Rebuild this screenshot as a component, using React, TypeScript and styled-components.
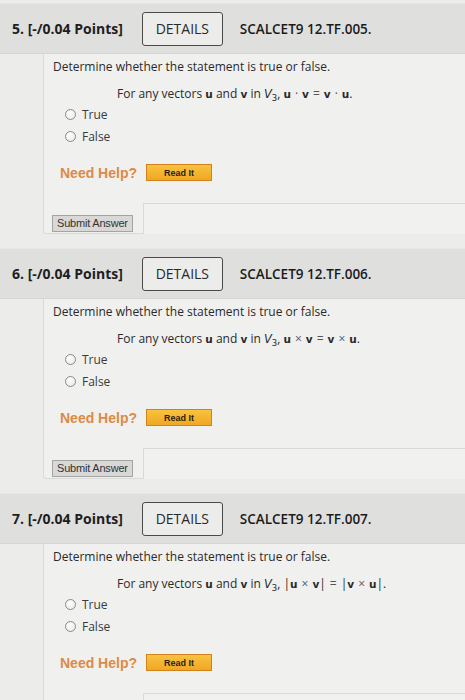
import styled, { createGlobalStyle } from "styled-components";

type Question = {
  num: number;
  code: string;
  lhs: React.ReactNode;
  rhs: React.ReactNode;
};

const GlobalStyle = createGlobalStyle`
  html, body {
    margin: 0;
    padding: 0;
    background: #ececeb;
  }
  body {
    width: 465px;
    height: 700px;
    overflow: hidden;
    font-family: "Open Sans", "Liberation Sans", sans-serif;
    color: #222;
  }
`;

const B = styled.b`
  font-weight: 700;
  font-family: "DejaVu Sans", "Open Sans", sans-serif;
  font-size: 10.5px;
`;

const Op = styled.span`
  color: #555;
  margin: 0 4px;
`;

const V3 = () => (
  <Var>
    V<sub>3</sub>
  </Var>
);

const questions: Question[] = [
  {
    num: 5,
    code: "SCALCET9 12.TF.005.",
    lhs: (
      <>
        <B>u</B>
        <Op>·</Op>
        <B>v</B>
      </>
    ),
    rhs: (
      <>
        <B>v</B>
        <Op>·</Op>
        <B>u</B>
      </>
    ),
  },
  {
    num: 6,
    code: "SCALCET9 12.TF.006.",
    lhs: (
      <>
        <B>u</B>
        <Op>×</Op>
        <B>v</B>
      </>
    ),
    rhs: (
      <>
        <B>v</B>
        <Op>×</Op>
        <B>u</B>
      </>
    ),
  },
  {
    num: 7,
    code: "SCALCET9 12.TF.007.",
    lhs: (
      <>
        |<B>u</B>
        <Op>×</Op>
        <B>v</B>|
      </>
    ),
    rhs: (
      <>
        |<B>v</B>
        <Op>×</Op>
        <B>u</B>|
      </>
    ),
  },
];

const App = () => {
  return (
    <>
      <GlobalStyle />
      <Page>
        {questions.map((q) => (
          <Section key={q.num}>
            <Header>
              <Points>
                {q.num}. [-/0.04 Points]
              </Points>
              <DetailsBtn>DETAILS</DetailsBtn>
              <Code>{q.code}</Code>
            </Header>
            <Panel>
              <Content>
                <Prompt>Determine whether the statement is true or false.</Prompt>
                <Statement>
                  For any vectors <B>u</B> and <B>v</B> in <V3 />,{" "}
                  {q.lhs}
                  <Op>=</Op>
                  {q.rhs}.
                </Statement>
                <Options>
                  <Option>
                    <Radio />
                    True
                  </Option>
                  <Option>
                    <Radio />
                    False
                  </Option>
                </Options>
                <Help>
                  <HelpLabel>Need Help?</HelpLabel>
                  <ReadIt>Read It</ReadIt>
                </Help>
              </Content>
              <Footer>
                <SubmitTab>
                  <SubmitBtn>Submit Answer</SubmitBtn>
                </SubmitTab>
                <FooterRest />
              </Footer>
            </Panel>
          </Section>
        ))}
      </Page>
    </>
  );
};

export default App;

const Page = styled.div`
  display: flex;
  flex-direction: column;
  gap: 14px;
  padding-top: 3px;
`;

const Section = styled.section`
  display: flex;
  flex-direction: column;
`;

const Header = styled.div`
  height: 49px;
  display: flex;
  align-items: center;
  padding-left: 12px;
  background: #dfdfde;
  border-top: 1px solid #e6e6e5;
  border-bottom: 1px solid #d6d6d4;
`;

const Points = styled.span`
  font-weight: 700;
  font-size: 14px;
  color: #1e1e1e;
`;

const DetailsBtn = styled.div`
  margin-left: 19px;
  width: 79px;
  height: 32px;
  display: flex;
  align-items: center;
  justify-content: center;
  border: 1px solid #4a4a4a;
  border-radius: 3px;
  background: #ececeb;
  font-size: 14px;
  color: #2a2a2a;
`;

const Code = styled.span`
  margin-left: 17px;
  font-weight: 600;
  font-size: 13.5px;
  color: #1a1a1a;
`;

const Panel = styled.div`
  margin-left: 43px;
  display: flex;
  flex-direction: column;
`;

const Content = styled.div`
  background: #f0f0ef;
  border-left: 1px solid #d9d9d7;
  padding: 4px 0 0 9px;
  height: 149px;
  box-sizing: border-box;
  display: flex;
  flex-direction: column;
`;

const Prompt = styled.div`
  font-size: 12px;
  color: #2a2a2a;
`;

const Statement = styled.div`
  margin: 10px 0 0 64px;
  font-size: 12px;
  color: #2a2a2a;
  display: flex;
  align-items: baseline;
  white-space: pre;
`;

const Var = styled.i`
  font-family: "DejaVu Sans", "Open Sans", sans-serif;
  font-size: 11.5px;
  & > sub {
    font-style: normal;
    font-size: 8.5px;
  }
`;

const Options = styled.div`
  margin: 3px 0 0 12px;
  display: flex;
  flex-direction: column;
  gap: 5px;
`;

const Option = styled.label`
  display: flex;
  align-items: center;
  gap: 6px;
  font-size: 12px;
  color: #3a3a3a;
`;

const Radio = styled.span`
  width: 9px;
  height: 9px;
  border-radius: 50%;
  border: 1px solid #8a8a8a;
  background: radial-gradient(circle at 40% 35%, #ffffff, #e6e6e6);
`;

const Help = styled.div`
  margin: 19px 0 0 7px;
  display: flex;
  align-items: center;
  gap: 9px;
`;

const HelpLabel = styled.span`
  font-family: "Liberation Sans", Arial, sans-serif;
  font-weight: 700;
  font-size: 14px;
  color: #dc8a45;
`;

const ReadIt = styled.span`
  width: 64px;
  height: 15px;
  display: flex;
  align-items: center;
  justify-content: center;
  background: linear-gradient(#f8c33e, #efa723);
  border: 1px solid #d2811c;
  font-family: "Liberation Sans", Arial, sans-serif;
  font-weight: 700;
  font-size: 9px;
  color: #2b1e0e;
`;

const Footer = styled.div`
  display: flex;
`;

const SubmitTab = styled.div`
  width: 101px;
  height: 31px;
  background: #f0f0ef;
  border-left: 1px solid #d9d9d7;
  border-bottom: 1px solid #d9d9d7;
  border-right: 1px solid #d9d9d7;
  border-bottom-left-radius: 3px;
  padding: 7px 0 0 8px;
  box-sizing: border-box;
`;

const SubmitBtn = styled.span`
  display: inline-flex;
  align-items: center;
  height: 15px;
  padding: 0 4px;
  background: #d8d8d7;
  border: 1px solid #a4a4a2;
  font-family: "Liberation Sans", Arial, sans-serif;
  font-size: 11px;
  letter-spacing: -0.2px;
  color: #333;
`;

const FooterRest = styled.div`
  flex: 1;
  border-top: 1px solid #d9d9d7;
  background: #f1f1f0;
`;
